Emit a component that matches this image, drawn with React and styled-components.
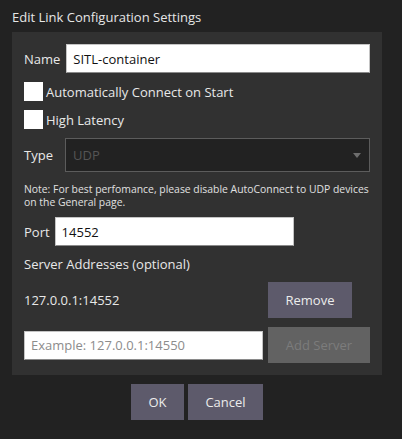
import React from 'react';
import styled, { createGlobalStyle } from 'styled-components';

const GlobalStyle = createGlobalStyle`
  html, body {
    margin: 0;
    padding: 0;
    background: #222222;
  }
  body {
    font-family: "Open Sans", "Liberation Sans", sans-serif;
    color: #e8e8e8;
  }
`;

const Dialog = styled.div`
  width: 402px;
  height: 439px;
  background: #222222;
  box-sizing: border-box;
  padding: 0 20px 0 12px;
`;

const Title = styled.div`
  height: 32px;
  line-height: 34px;
  font-size: 13px;
  color: #e6e6e6;
`;

const Panel = styled.div`
  background: #313131;
  padding: 12px;
  display: flex;
  flex-direction: column;
`;

const Row = styled.div`
  display: flex;
  align-items: center;
  margin-top: ${({ $top }) => $top || 0}px;
  gap: ${({ $gap }) => $gap || 0}px;
`;

const Label = styled.span`
  font-size: 13px;
  color: #e8e8e8;
  width: ${({ $width }) => ($width ? `${$width}px` : 'auto')};
  flex-shrink: 0;
`;

const TextInput = styled.div`
  box-sizing: border-box;
  height: 29px;
  width: ${({ $width }) => ($width ? `${$width}px` : 'auto')};
  flex: ${({ $width }) => ($width ? '0 0 auto' : '1')};
  background: #ffffff;
  border: 1px solid #c4c4c4;
  border-bottom-color: #8a8a8a;
  padding-left: 6px;
  display: flex;
  align-items: center;
  font-size: 13px;
  color: ${({ $placeholder }) => ($placeholder ? '#8c8c8c' : '#111111')};
`;

const Check = styled.div`
  width: 19px;
  height: 19px;
  background: #ffffff;
  flex-shrink: 0;
`;

const Select = styled.div`
  flex: 1;
  box-sizing: border-box;
  height: 34px;
  background: #222222;
  border: 1px solid #5c5c5c;
  display: flex;
  align-items: center;
  justify-content: space-between;
  padding: 0 8px 0 7px;
  font-size: 13px;
  color: #555555;
`;

const Arrow = styled.span`
  width: 0;
  height: 0;
  border-left: 4px solid transparent;
  border-right: 4px solid transparent;
  border-top: 5px solid #6e6e6e;
  margin-top: 1px;
`;

const Note = styled.div`
  margin-top: 11px;
  font-size: 10.4px;
  line-height: 13px;
  color: #e0e0e0;
`;

const Button = styled.div`
  box-sizing: border-box;
  height: 36px;
  width: ${({ $width }) => $width}px;
  display: flex;
  align-items: center;
  justify-content: center;
  font-size: 13px;
  background: ${({ $disabled }) => ($disabled ? '#626262' : '#5d5a6b')};
  color: ${({ $disabled }) => ($disabled ? '#7c7c7c' : '#ececec')};
  flex-shrink: 0;
`;

const AddressRow = styled.div`
  display: flex;
  align-items: center;
  justify-content: space-between;
  margin-top: 9px;
  padding-right: 18px;
`;

const Footer = styled.div`
  display: flex;
  justify-content: center;
  gap: 4px;
  margin-top: 9px;
`;

export default function App() {
  return (
    <>
      <GlobalStyle />
      <Dialog>
        <Title>Edit Link Configuration Settings</Title>
        <Panel>
          <Row $gap={6}>
            <Label>Name</Label>
            <TextInput>SITL-container</TextInput>
          </Row>
          <Row $top={9} $gap={3}>
            <Check />
            <Label>Automatically Connect on Start</Label>
          </Row>
          <Row $top={9} $gap={3}>
            <Check />
            <Label>High Latency</Label>
          </Row>
          <Row $top={9}>
            <Label $width={41}>Type</Label>
            <Select>
              UDP
              <Arrow />
            </Select>
          </Row>
          <Note>
            Note: For best perfomance, please disable AutoConnect to UDP devices
            <br />
            on the General page.
          </Note>
          <Row $top={8} $gap={5}>
            <Label>Port</Label>
            <TextInput $width={239}>14552</TextInput>
          </Row>
          <Row $top={9}>
            <Label>Server Addresses (optional)</Label>
          </Row>
          <AddressRow>
            <Label>127.0.0.1:14552</Label>
            <Button $width={84}>Remove</Button>
          </AddressRow>
          <Row $top={9} $gap={5}>
            <TextInput $placeholder>Example: 127.0.0.1:14550</TextInput>
            <Button $width={102} $disabled>
              Add Server
            </Button>
          </Row>
        </Panel>
        <Footer>
          <Button $width={53}>OK</Button>
          <Button $width={75}>Cancel</Button>
        </Footer>
      </Dialog>
    </>
  );
}
